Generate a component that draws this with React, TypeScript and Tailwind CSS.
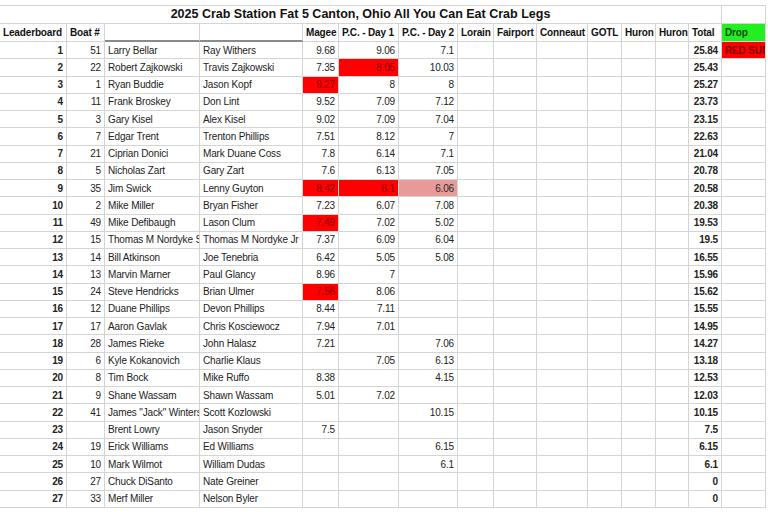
import type { ReactNode } from 'react';

type Mark = 'red' | 'pink' | undefined;

interface Entry {
    rank:   number;
    boat:   string;
    angler: string;
    partner: string;
    magee?:  string;
    day1?:   string;
    day2?:   string;
    total:   string;
    marks?:  { magee?: Mark; day1?: Mark; day2?: Mark };
}

const HEADERS = ['Leaderboard', 'Boat #', '', '', 'Magee', 'P.C. - Day 1', 'P.C. - Day 2', 'Lorain', 'Fairport', 'Conneaut', 'GOTL', 'Huron', 'Huron', 'Total'];

const ENTRIES: Entry[] = [
    { rank: 1,  boat: '51', angler: 'Larry Bellar',         partner: 'Ray Withers',         magee: '9.68', day1: '9.06', day2: '7.1',   total: '25.84' },
    { rank: 2,  boat: '22', angler: 'Robert Zajkowski',     partner: 'Travis Zajkowski',    magee: '7.35', day1: '8.05', day2: '10.03', total: '25.43', marks: { day1: 'red' } },
    { rank: 3,  boat: '1',  angler: 'Ryan Buddie',          partner: 'Jason Kopf',          magee: '9.27', day1: '8',    day2: '8',     total: '25.27', marks: { magee: 'red' } },
    { rank: 4,  boat: '11', angler: 'Frank Broskey',        partner: 'Don Lint',            magee: '9.52', day1: '7.09', day2: '7.12',  total: '23.73' },
    { rank: 5,  boat: '3',  angler: 'Gary Kisel',           partner: 'Alex Kisel',          magee: '9.02', day1: '7.09', day2: '7.04',  total: '23.15' },
    { rank: 6,  boat: '7',  angler: 'Edgar Trent',          partner: 'Trenton Phillips',    magee: '7.51', day1: '8.12', day2: '7',     total: '22.63' },
    { rank: 7,  boat: '21', angler: 'Ciprian Donici',       partner: 'Mark Duane Coss',     magee: '7.8',  day1: '6.14', day2: '7.1',   total: '21.04' },
    { rank: 8,  boat: '5',  angler: 'Nicholas Zart',        partner: 'Gary Zart',           magee: '7.6',  day1: '6.13', day2: '7.05',  total: '20.78' },
    { rank: 9,  boat: '35', angler: 'Jim Swick',            partner: 'Lenny Guyton',        magee: '8.42', day1: '6.1',  day2: '6.06',  total: '20.58', marks: { magee: 'red', day1: 'red', day2: 'pink' } },
    { rank: 10, boat: '2',  angler: 'Mike Miller',          partner: 'Bryan Fisher',        magee: '7.23', day1: '6.07', day2: '7.08',  total: '20.38' },
    { rank: 11, boat: '49', angler: 'Mike Defibaugh',       partner: 'Lason Clum',          magee: '7.49', day1: '7.02', day2: '5.02',  total: '19.53', marks: { magee: 'red' } },
    { rank: 12, boat: '15', angler: 'Thomas M Nordyke Sr',  partner: 'Thomas M Nordyke Jr', magee: '7.37', day1: '6.09', day2: '6.04',  total: '19.5' },
    { rank: 13, boat: '14', angler: 'Bill Atkinson',        partner: 'Joe Tenebria',        magee: '6.42', day1: '5.05', day2: '5.08',  total: '16.55' },
    { rank: 14, boat: '13', angler: 'Marvin Marner',        partner: 'Paul Glancy',         magee: '8.96', day1: '7',                   total: '15.96' },
    { rank: 15, boat: '24', angler: 'Steve Hendricks',      partner: 'Brian Ulmer',         magee: '7.56', day1: '8.06',                total: '15.62', marks: { magee: 'red' } },
    { rank: 16, boat: '12', angler: 'Duane Phillips',       partner: 'Devon Phillips',      magee: '8.44', day1: '7.11',                total: '15.55' },
    { rank: 17, boat: '17', angler: 'Aaron Gavlak',         partner: 'Chris Kosciewocz',    magee: '7.94', day1: '7.01',                total: '14.95' },
    { rank: 18, boat: '28', angler: 'James Rieke',          partner: 'John Halasz',         magee: '7.21',               day2: '7.06',  total: '14.27' },
    { rank: 19, boat: '6',  angler: 'Kyle Kokanovich',      partner: 'Charlie Klaus',                      day1: '7.05', day2: '6.13',  total: '13.18' },
    { rank: 20, boat: '8',  angler: 'Tim Bock',             partner: 'Mike Ruffo',          magee: '8.38',               day2: '4.15',  total: '12.53' },
    { rank: 21, boat: '9',  angler: 'Shane Wassam',         partner: 'Shawn Wassam',        magee: '5.01', day1: '7.02',                total: '12.03' },
    { rank: 22, boat: '41', angler: 'James "Jack" Winters', partner: 'Scott Kozlowski',                                  day2: '10.15', total: '10.15' },
    { rank: 23, boat: '',   angler: 'Brent Lowry',          partner: 'Jason Snyder',        magee: '7.5',                               total: '7.5' },
    { rank: 24, boat: '19', angler: 'Erick Williams',       partner: 'Ed Williams',                                      day2: '6.15',  total: '6.15' },
    { rank: 25, boat: '10', angler: 'Mark Wilmot',          partner: 'William Dudas',                                    day2: '6.1',   total: '6.1' },
    { rank: 26, boat: '27', angler: 'Chuck DiSanto',        partner: 'Nate Greiner',                                                    total: '0' },
    { rank: 27, boat: '33', angler: 'Merf Miller',          partner: 'Nelson Byler',                                                    total: '0' },
];

const GRID = 'grid grid-cols-[67px_38px_95px_103px_36px_60px_59px_36px_43px_51px_34px_34px_33px_33px_44px]';

function Cell({ children, className = '' }: { children?: ReactNode; className?: string }) {
    return (
        <div className={`flex items-center overflow-hidden whitespace-nowrap border-r border-b border-[#d4d4d4] px-[3px] ${className}`}>
            {children}
        </div>
    );
}

function ScoreCell({ value, mark }: { value?: string; mark?: Mark }) {
    const tone =
        mark === 'red'  ? 'bg-[#fe0000] text-[#8a0000]' :
        mark === 'pink' ? 'bg-[#e89a9a] text-[#2a2a2a]' : '';
    return <Cell className={`justify-end ${tone}`}>{value}</Cell>;
}

export default function App() {
    return (
        <div className="min-h-[512px] bg-white pt-[5px] text-[10px] tracking-[-0.15px] text-[#222] [font-family:'Liberation_Sans',Arial,sans-serif]">
            <div className={`${GRID} grid-rows-[19px_18px] auto-rows-[17.26px]`}>
                <Cell className="col-span-14 justify-center border-t text-[12.5px] font-bold tracking-normal text-[#111]">
                    2025 Crab Station Fat 5 Canton, Ohio All You Can Eat Crab Legs
                </Cell>
                <Cell className="border-t" />

                {HEADERS.map((h, i) => (
                    <Cell
                        key={i}
                        className={`font-bold text-[#111] ${i === 2 || i === 3 ? 'border-b-2 border-b-[#8a8a8a]' : ''}`}
                    >
                        {h}
                    </Cell>
                ))}
                <Cell className="bg-[#22ee22] font-bold text-[#154a15]">Drop</Cell>

                {ENTRIES.map((e) => (
                    <div key={e.rank} className="contents">
                        <Cell className="justify-end font-bold">{e.rank}</Cell>
                        <Cell className="justify-end">{e.boat}</Cell>
                        <Cell>{e.angler}</Cell>
                        <Cell>{e.partner}</Cell>
                        <ScoreCell value={e.magee} mark={e.marks?.magee} />
                        <ScoreCell value={e.day1} mark={e.marks?.day1} />
                        <ScoreCell value={e.day2} mark={e.marks?.day2} />
                        <Cell />
                        <Cell />
                        <Cell />
                        <Cell />
                        <Cell />
                        <Cell />
                        <Cell className="justify-end font-bold">{e.total}</Cell>
                        {e.rank === 1 ? (
                            <Cell className="bg-[#fe0000] font-bold text-[#8a0000]">RED SUN</Cell>
                        ) : (
                            <Cell />
                        )}
                    </div>
                ))}
            </div>
        </div>
    );
}
